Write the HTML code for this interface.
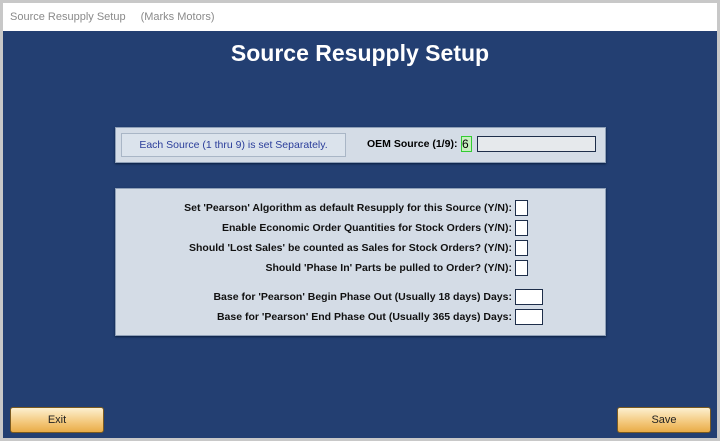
<!DOCTYPE html>
<html><head><style>
body{margin:0;width:720px;height:441px;background:#c8c8c8;position:relative;overflow:hidden;font-family:"Liberation Sans",Arial,sans-serif}
.title{position:absolute;left:3px;top:3px;width:714px;height:28px;background:#fff;color:#8a8a8a;font-size:11px;line-height:28px}
.main{position:absolute;left:3px;top:31px;width:714px;height:407px;background:#233f72}
h1{position:absolute;left:0;width:720px;top:40px;margin:0;text-align:center;color:#fff;font-size:23px;font-weight:bold}
.panel{position:absolute;background:#d4dce6;border:1px solid #8fa0b8;box-shadow:0 1px 2px #0a1f40}
.lbl{position:absolute;font-size:10.5px;font-weight:bold;color:#111;text-align:right;right:93px;width:480px}
.cb{position:absolute;left:399px;width:11px;height:14px;background:#fff;border:1px solid #1e2e4a}
.in{position:absolute;left:399px;width:26px;height:14px;background:#fff;border:1px solid #1e2e4a}
.btn{position:absolute;top:407px;width:92px;height:24px;border:1px solid #7a5a20;border-radius:3px;background:linear-gradient(#fdf0d0,#f3c77a 60%,#e9ac48);font-size:11px;text-align:center;line-height:24px;color:#222}
</style></head><body>
<div class="title"><span style="margin-left:7px">Source Resupply Setup</span><span style="margin-left:15px">(Marks Motors)</span></div>
<div class="main"></div>
<h1>Source Resupply Setup</h1>
<div class="panel" style="left:115px;top:127px;width:489px;height:34px">
 <div style="position:absolute;left:5px;top:5px;width:223px;height:22px;border:1px solid #a9b6c6;background:#dbe3ec;color:#2a3d9a;font-size:10.5px;line-height:22px;text-align:center">Each Source (1 thru 9) is set Separately.</div>
 <div style="position:absolute;left:251px;top:10px;font-size:10.5px;font-weight:bold">OEM Source (1/9):</div>
 <div style="position:absolute;left:345px;top:8px;width:9px;height:14px;border:1px solid #3c3;background:#c8f0c0;font-size:12px;line-height:14px">6</div>
 <div style="position:absolute;left:361px;top:8px;width:117px;height:14px;border:1px solid #1e2e4a;background:#e6e9ec"></div>
</div>
<div class="panel" style="left:115px;top:188px;width:489px;height:146px">
 <div class="lbl" style="top:13px">Set 'Pearson' Algorithm as default Resupply for this Source (Y/N):</div><div class="cb" style="top:11px"></div>
 <div class="lbl" style="top:33px">Enable Economic Order Quantities for Stock Orders (Y/N):</div><div class="cb" style="top:31px"></div>
 <div class="lbl" style="top:53px">Should 'Lost Sales' be counted as Sales for Stock Orders? (Y/N):</div><div class="cb" style="top:51px"></div>
 <div class="lbl" style="top:73px">Should 'Phase In' Parts be pulled to Order? (Y/N):</div><div class="cb" style="top:71px"></div>
 <div class="lbl" style="top:102px">Base for 'Pearson' Begin Phase Out (Usually 18 days) Days:</div><div class="in" style="top:100px"></div>
 <div class="lbl" style="top:122px">Base for 'Pearson' End Phase Out (Usually 365 days) Days:</div><div class="in" style="top:120px"></div>
</div>
<div class="btn" style="left:10px">Exit</div>
<div class="btn" style="left:617px">Save</div>
</body></html>
